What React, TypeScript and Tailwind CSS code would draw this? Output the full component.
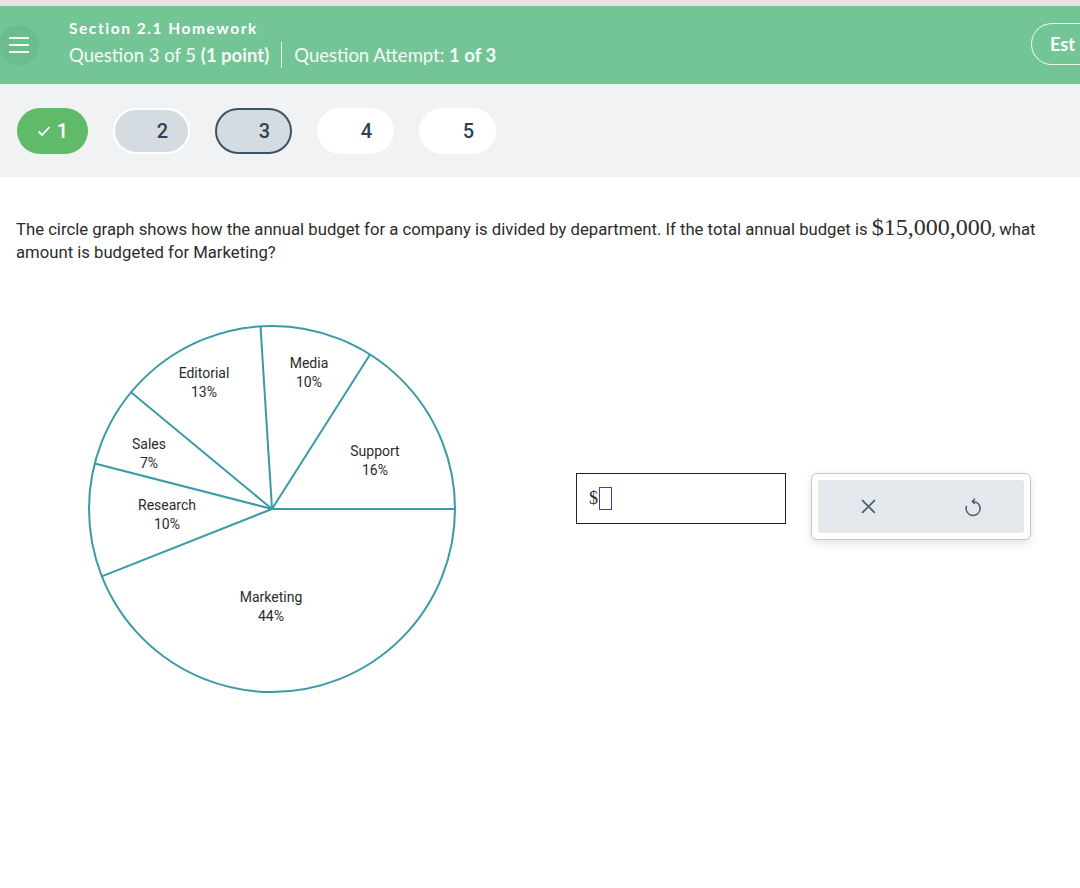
import React from "react";

const cx = 185;
const cy = 185;
const r = 184;
const bounds = [0, 57.6, 93.6, 140.4, 165.6, 201.6];

const labels = [
  { name: "Editorial", pct: "13%", x: 117, y: 40 },
  { name: "Media", pct: "10%", x: 222, y: 30 },
  { name: "Support", pct: "16%", x: 288, y: 118 },
  { name: "Sales", pct: "7%", x: 62, y: 111 },
  { name: "Research", pct: "10%", x: 80, y: 172 },
  { name: "Marketing", pct: "44%", x: 184, y: 264 },
];

function Pie() {
  return (
    <div className="relative w-[370px] h-[370px] shrink-0">
      <svg width="370" height="370" viewBox="0 0 370 370" className="absolute inset-0">
        <circle cx={cx} cy={cy} r={r - 1} fill="white" stroke="#3a9aa6" strokeWidth="2" />
        {bounds.map((b) => {
          const a = (b * Math.PI) / 180;
          return (
            <line
              key={b}
              x1={cx}
              y1={cy}
              x2={cx + (r - 1) * Math.cos(a)}
              y2={cy - (r - 1) * Math.sin(a)}
              stroke="#3a9aa6"
              strokeWidth="2"
            />
          );
        })}
      </svg>
      {labels.map((l) => (
        <div
          key={l.name}
          className="absolute -translate-x-1/2 text-center text-[14px] leading-[19px] text-[#2b2b2b]"
          style={{ left: l.x, top: l.y, fontFamily: "Roboto, sans-serif" }}
        >
          <div>{l.name}</div>
          <div>{l.pct}</div>
        </div>
      ))}
    </div>
  );
}

export default function App() {
  const pillBase =
    "h-[46px] rounded-full flex items-center justify-center text-[20px] font-medium text-[#2d4352] font-['Roboto',sans-serif]";
  return (
    <div className="w-[1080px] h-[888px] overflow-hidden bg-white font-['Roboto',sans-serif]">
      <div className="h-[6px] bg-[#e3e6e4]" />
      <div className="h-[78px] bg-[#73c596] flex items-center relative">
        <div className="w-[40px] h-[40px] rounded-full bg-[#6bbd8c] -ml-[1px] flex items-center justify-center">
          <svg width="24" height="20" viewBox="0 0 24 20">
            <path d="M2 3h20M2 10h20M2 17h20" stroke="#f2fbf5" strokeWidth="2" />
          </svg>
        </div>
        <div className="ml-[30px] flex flex-col text-white font-['Lato',sans-serif]">
          <div className="text-[15.5px] font-bold tracking-[0.1em] leading-[20px] -mt-[4px]">
            Section 2.1 Homework
          </div>
          <div className="flex items-center text-[18.5px] leading-[26px] mt-[4px] text-[#f3fbf6]">
            <span>
              Question 3 of 5 <span className="font-bold">(1 point)</span>
            </span>
            <span className="mx-[12px] w-px h-[26px] bg-[#e9f7ee]" />
            <span>
              Question Attempt: <span className="font-bold">1 of 3</span>
            </span>
          </div>
        </div>
        <div className="absolute left-[1031px] top-[17px] h-[42px] w-[80px] rounded-l-full border-y border-l border-[#eaf7ef] flex items-center pl-[18px] text-white font-bold text-[18px] font-['Lato',sans-serif] whitespace-nowrap overflow-hidden">
          Est
        </div>
      </div>
      <div className="h-[93px] bg-[#f0f2f3] flex items-center pl-[17px] gap-[25px] border-t border-[#e6f4ea]">
        <div className={`${pillBase} w-[71px] bg-[#5fbb6a] text-white gap-[6px]`}>
          <svg width="14" height="12" viewBox="0 0 14 12">
            <path d="M1.5 6.5l3.5 3.5 7.5-8" stroke="white" strokeWidth="1.8" fill="none" />
          </svg>
          <span className="text-white">1</span>
        </div>
        <div className={`${pillBase} w-[77px] pl-[22px] bg-[#d5dce1] border-2 border-white`}>2</div>
        <div className={`${pillBase} w-[77px] pl-[22px] bg-[#d5dce1] border-2 border-[#3c5462]`}>3</div>
        <div className={`${pillBase} w-[77px] pl-[22px] bg-white`}>4</div>
        <div className={`${pillBase} w-[77px] pl-[22px] bg-white`}>5</div>
      </div>
      <div className="px-[16px] pt-[40px] text-[16.7px] leading-[23px] text-[#2b2b2b] w-[1070px]">
        The circle graph shows how the annual budget for a company is divided by department. If the total annual budget is{" "}
        <span className="font-['Liberation_Serif',serif] text-[24px] leading-[20px]">$15,000,000</span>, what amount is budgeted for Marketing?
      </div>
      <div className="flex items-start mt-[60px] pl-[87px]">
        <Pie />
        <div className="ml-[119px] mt-[149px] w-[210px] h-[51px] border border-[#222] flex items-center pl-[12px]">
          <span className="font-['Liberation_Serif',serif] text-[18px] text-[#2b2b2b]">$</span>
          <span className="w-[13px] h-[23px] border border-[#3b3fb0] ml-[1px]" />
        </div>
        <div className="ml-[25px] mt-[149px] w-[220px] h-[67px] rounded-[6px] border border-[#c4c8cb] bg-white shadow-[0_3px_8px_rgba(0,0,0,0.12)] p-[6px]">
          <div className="h-full rounded-[3px] bg-[#e3e8ec] flex items-center justify-between px-[42px]">
            <svg width="17" height="17" viewBox="0 0 16 16">
              <path d="M2 2l12 12M14 2L2 14" stroke="#4a5d6a" strokeWidth="1.6" />
            </svg>
            <svg width="18" height="20" viewBox="0 0 18 20">
              <path d="M9 4.5A7 7 0 1 1 2.6 9" stroke="#4a5d6a" strokeWidth="1.5" fill="none" />
              <path d="M11 1.8L8.3 4.5 11 7" stroke="#4a5d6a" strokeWidth="1.5" fill="none" />
            </svg>
          </div>
        </div>
      </div>
    </div>
  );
}
